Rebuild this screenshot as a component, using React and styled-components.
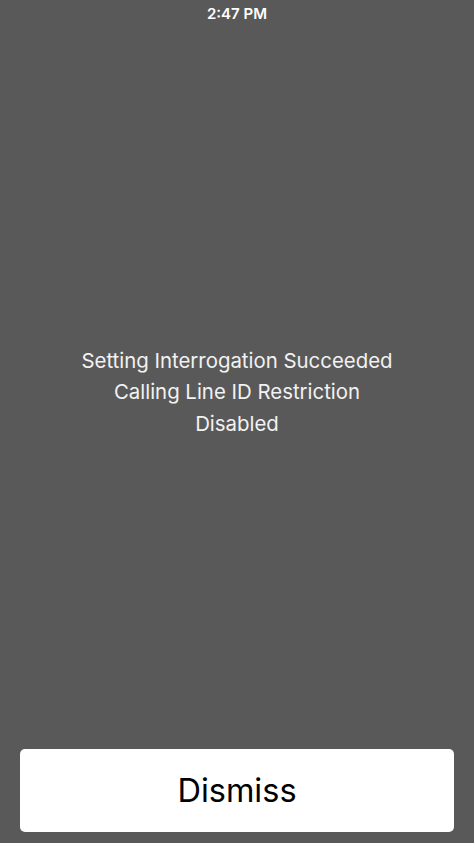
import React from "react";
import styled, { createGlobalStyle } from "styled-components";

const Global = createGlobalStyle`
  html, body { margin: 0; padding: 0; background: #595959; }
  #root { min-height: 100vh; }
`;

const Screen = styled.div`
  width: 474px;
  height: 843px;
  background: #595959;
  display: flex;
  flex-direction: column;
  font-family: Inter, "Liberation Sans", Arial, sans-serif;
  box-sizing: border-box;
  padding: 0 20px 11px;
`;

const StatusBar = styled.div`
  height: 26px;
  display: flex;
  align-items: center;
  justify-content: center;
  color: #ffffff;
  font-size: 15px;
  font-weight: 600;
`;

const Body = styled.div`
  flex: 1;
  display: flex;
  align-items: center;
  justify-content: center;
  padding-top: 9px;
`;

const Message = styled.div`
  color: #f2f2f2;
  text-align: center;
  font-size: 20.4px;
  line-height: 31.5px;
`;

const DismissButton = styled.button`
  height: 83px;
  width: 100%;
  border: none;
  border-radius: 5px;
  background: #ffffff;
  color: #000000;
  font-family: Inter, "Liberation Sans", Arial, sans-serif;
  font-size: 32.5px;
  display: flex;
  align-items: center;
  justify-content: center;
  padding: 0;
  cursor: pointer;
`;

export default function App() {
  return (
    <>
      <Global />
      <Screen>
        <StatusBar>2:47 PM</StatusBar>
        <Body>
          <Message>
            Setting Interrogation Succeeded
            <br />
            Calling Line ID Restriction
            <br />
            Disabled
          </Message>
        </Body>
        <DismissButton>Dismiss</DismissButton>
      </Screen>
    </>
  );
}
